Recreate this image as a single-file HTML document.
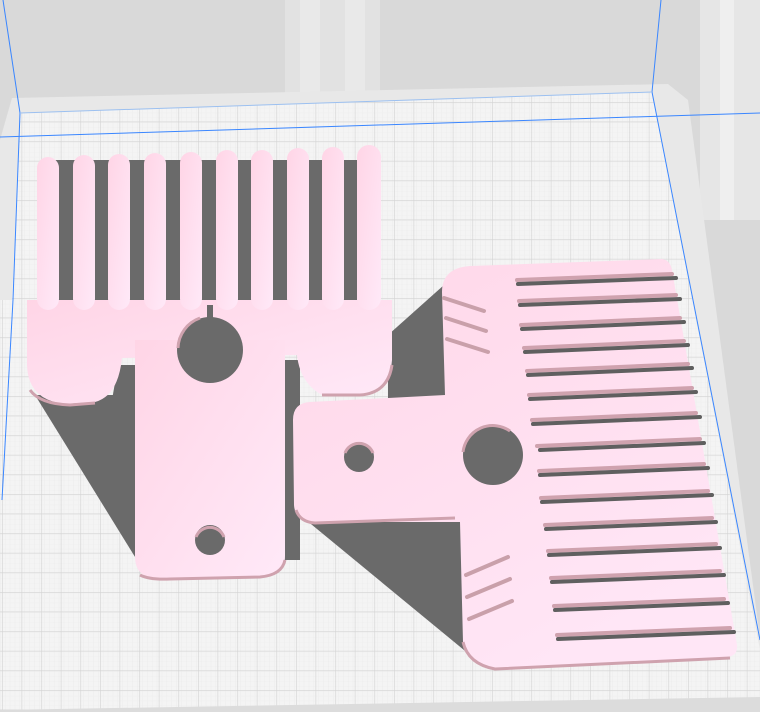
<!DOCTYPE html>
<html><head><meta charset="utf-8"><style>
html,body{margin:0;padding:0;background:#d9d9d9;}
svg{display:block}
</style></head><body>
<svg width="760" height="712" viewBox="0 0 760 712" xmlns="http://www.w3.org/2000/svg">
<defs>
<pattern id="minor" width="4.9" height="4.9" patternUnits="userSpaceOnUse">
<path d="M0 0H4.9M0 0V4.9" stroke="#e9e9e9" stroke-width="0.6" fill="none"/>
</pattern>
<pattern id="major" width="19.6" height="19.6" patternUnits="userSpaceOnUse" x="2" y="4">
<path d="M0 0H19.6M0 0V19.6" stroke="#d3d3d3" stroke-width="1.2" fill="none"/>
</pattern>
<linearGradient id="pk" x1="0" y1="0" x2="1" y2="1">
<stop offset="0" stop-color="#ffd5e6"/><stop offset="1" stop-color="#ffe9f8"/>
</linearGradient>
<linearGradient id="pk2" x1="0" y1="0" x2="0.6" y2="1">
<stop offset="0" stop-color="#ffd7e8"/><stop offset="1" stop-color="#ffe6f6"/>
</linearGradient>
</defs>
<rect width="760" height="712" fill="#d9d9d9"/>
<rect x="285" y="0" width="95" height="100" fill="#e2e2e2"/>
<rect x="300" y="0" width="20" height="100" fill="#e9e9e9"/>
<rect x="345" y="0" width="20" height="100" fill="#e9e9e9"/>
<rect x="700" y="0" width="60" height="220" fill="#e6e6e6"/>
<rect x="720" y="0" width="14" height="220" fill="#efefef"/>
<polygon points="12,98 668,84 688,100 770,712 0,712 0,140" fill="#e8e8e8"/>
<polygon points="20,113 652,92 772,712 0,712 0,300 12,300" fill="#f4f4f4"/>
<polygon points="20,113 652,92 772,712 0,712 0,300 12,300" fill="url(#minor)"/>
<polygon points="20,113 652,92 772,712 0,712 0,300 12,300" fill="url(#major)"/>
<polygon points="0,710 760,697 760,712 0,712" fill="#dcdcdc"/>
<g stroke="#3a86ff" stroke-width="1" fill="none">
<line x1="3" y1="0" x2="20" y2="113"/>
<line x1="20" y1="113" x2="13" y2="300"/>
<line x1="13" y1="300" x2="2" y2="500"/>
<line x1="661" y1="0" x2="652" y2="92"/>
<line x1="652" y1="92" x2="760" y2="640"/>
<line x1="0" y1="137" x2="760" y2="113"/>
<line x1="20" y1="113" x2="652" y2="92" stroke="#9cc0f0"/>
</g>
<g fill="#6a6a6a">
<rect x="45" y="160" width="312" height="152"/>
<polygon points="35,395 140,395 140,565"/>
<polygon points="118,365 140,365 140,400 112,400"/>
<polygon points="280,360 300,360 300,560 280,560"/>
<polygon points="300,515 465,515 470,655"/>
<polygon points="388,335 444,285 447,398 388,402"/>
</g>
<!-- LEFT COMB -->
<g fill="url(#pk)">
<path d="M27,300 L392,300 L392,360 Q390,395 355,395 L322,395 Q300,383 297,355 L122,358 Q118,396 95,402 L65,404 Q28,400 27,365 Z"/>
<path d="M135,340 L285,340 L285,556 Q285,577 262,577 L157,578 Q135,578 135,556 Z"/>
<rect x="37" y="157" width="22" height="153" rx="11"/>
<rect x="73" y="155" width="22" height="155" rx="11"/>
<rect x="108" y="154" width="22" height="156" rx="11"/>
<rect x="144" y="153" width="22" height="157" rx="11"/>
<rect x="180" y="152" width="22" height="158" rx="11"/>
<rect x="216" y="150" width="22" height="160" rx="11"/>
<rect x="251" y="150" width="22" height="160" rx="11"/>
<rect x="287" y="148" width="22" height="162" rx="11"/>
<rect x="322" y="147" width="22" height="163" rx="11"/>
<rect x="357" y="145" width="24" height="165" rx="12"/>
</g>
<path d="M30,390 Q40,404 70,405 L95,403" stroke="#cfa2ae" stroke-width="3" fill="none"/>
<path d="M140,575 Q150,580 170,579 L260,577 Q282,575 285,560" stroke="#cfa2ae" stroke-width="3" fill="none"/>
<path d="M322,395 L360,395 Q388,393 392,365" stroke="#cfa2ae" stroke-width="3" fill="none"/>
<rect x="207" y="305" width="6" height="30" fill="#6a6a6a"/>
<circle cx="210" cy="350" r="33" fill="#6a6a6a"/>
<path d="M178,348 A33,33 0 0 1 200,318" stroke="#cfa2ae" stroke-width="3" fill="none"/>
<circle cx="210" cy="540" r="15" fill="#6a6a6a"/>
<path d="M196,537 A15,15 0 0 1 224,537" stroke="#cfa2ae" stroke-width="3" fill="none"/>
<!-- RIGHT COMB -->
<path d="M442,292 Q442,268 470,266 L662,259 Q670,260 672,270 L737,645 Q738,656 727,657 L495,668 Q466,666 463,642 L460,522 L312,522 Q295,521 294,505 L293,420 Q293,403 310,402 L445,395 Z" fill="url(#pk2)"/>
<path d="M463,642 Q468,664 495,669 L730,658" stroke="#cfa2ae" stroke-width="3" fill="none"/>
<path d="M296,510 Q300,522 315,523 L455,518" stroke="#cfa2ae" stroke-width="3" fill="none"/>
<g stroke-linecap="round" fill="none">
<g stroke="#cfa2ae" stroke-width="4">
<path d="M517,280 L672,274"/><path d="M519,301 L676,295"/><path d="M521,325 L680,318"/>
<path d="M524,348 L684,341"/><path d="M527,371 L688,364"/><path d="M529,395 L692,388"/>
<path d="M532,420 L696,413"/><path d="M537,446 L700,439"/><path d="M539,471 L704,464"/>
<path d="M541,498 L708,491"/><path d="M545,525 L712,518"/><path d="M548,551 L716,544"/>
<path d="M551,578 L720,571"/><path d="M554,606 L724,599"/><path d="M557,635 L730,628"/>
</g>
<g stroke="#5f5f5f" stroke-width="4">
<path d="M518,284 L676,278"/><path d="M520,305 L680,299"/><path d="M522,329 L684,322"/>
<path d="M525,352 L688,345"/><path d="M528,375 L692,368"/><path d="M530,399 L696,392"/>
<path d="M533,424 L700,417"/><path d="M540,450 L704,443"/><path d="M540,475 L708,468"/>
<path d="M542,502 L712,495"/><path d="M546,529 L716,522"/><path d="M549,555 L720,548"/>
<path d="M552,582 L724,575"/><path d="M555,610 L728,603"/><path d="M558,639 L734,632"/>
</g>
<g stroke="#c9a0aa" stroke-width="4">
<path d="M444,298 L484,311"/><path d="M446,318 L486,331"/><path d="M447,339 L488,352"/>
<path d="M466,575 L508,557"/><path d="M467,597 L510,579"/><path d="M469,619 L512,601"/>
</g>
</g>
<circle cx="493" cy="455" r="30" fill="#6a6a6a"/>
<path d="M463,452 A30,30 0 0 1 510,431" stroke="#cfa2ae" stroke-width="3" fill="none"/>
<circle cx="359" cy="457" r="15" fill="#6a6a6a"/>
<path d="M345,453 A15,15 0 0 1 373,453" stroke="#cfa2ae" stroke-width="3" fill="none"/>
</svg>
</body></html>
